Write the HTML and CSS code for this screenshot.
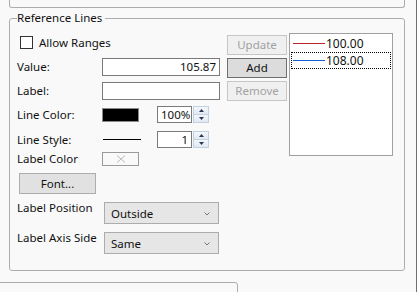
FILE: index.html
```
<!DOCTYPE html>
<html>
<head>
<meta charset="utf-8">
<link rel="stylesheet" href="styles.css">
</head>
<body>
<div class="screen">
  <div class="prev-box"></div>
  <fieldset class="group">
    <legend class="legend">Reference Lines</legend>
    <div class="group-body">
      <div class="form">
        <div class="row r-allow">
          <span class="checkbox"></span><span class="check-text">Allow Ranges</span>
        </div>
        <div class="row r-value">
          <span class="lbl">Value:</span>
          <div class="input num">105.87</div>
        </div>
        <div class="row r-label">
          <span class="lbl">Label:</span>
          <div class="input"></div>
        </div>
        <div class="row r-color">
          <span class="lbl">Line Color:</span>
          <span class="swatch black"></span>
          <div class="spin-field">
            <div class="spin-box">100%</div>
            <div class="spinner">
              <span class="spin-btn"><svg width="5" height="3" viewBox="0 0 5 3"><path d="M0 3L2.5 0L5 3Z" fill="#24385a"/></svg></span>
              <span class="spin-btn"><svg width="5" height="3" viewBox="0 0 5 3"><path d="M0 0L2.5 3L5 0Z" fill="#24385a"/></svg></span>
            </div>
          </div>
        </div>
        <div class="row r-style">
          <span class="lbl">Line Style:</span>
          <span class="line-sample"><span class="line-stroke"></span></span>
          <div class="spin-field">
            <div class="spin-box">1</div>
            <div class="spinner">
              <span class="spin-btn"><svg width="5" height="3" viewBox="0 0 5 3"><path d="M0 3L2.5 0L5 3Z" fill="#24385a"/></svg></span>
              <span class="spin-btn"><svg width="5" height="3" viewBox="0 0 5 3"><path d="M0 0L2.5 3L5 0Z" fill="#24385a"/></svg></span>
            </div>
          </div>
        </div>
        <div class="row r-lcolor">
          <span class="lbl">Label Color</span>
          <span class="swatch empty"><svg width="10" height="8" viewBox="0 0 10 8"><path d="M1 0.5L9 7.5M9 0.5L1 7.5" stroke="#b4b4b4" stroke-width="0.9" fill="none"/></svg></span>
        </div>
        <div class="row r-font">
          <span class="btn font-btn">Font...</span>
        </div>
        <div class="row r-pos">
          <span class="lbl lbl-top">Label Position</span>
          <div class="combo"><span>Outside</span><svg width="6" height="4" viewBox="0 0 6 4"><path d="M0.5 0.5L3 3L5.5 0.5" stroke="#6a6a6a" stroke-width="0.9" fill="none"/></svg></div>
        </div>
        <div class="row r-axis">
          <span class="lbl lbl-top">Label Axis Side</span>
          <div class="combo"><span>Same</span><svg width="6" height="4" viewBox="0 0 6 4"><path d="M0.5 0.5L3 3L5.5 0.5" stroke="#6a6a6a" stroke-width="0.9" fill="none"/></svg></div>
        </div>
      </div>
      <div class="buttons">
        <span class="btn disabled">Update</span>
        <span class="btn primary">Add</span>
        <span class="btn disabled">Remove</span>
      </div>
      <div class="listbox">
        <div class="item"><span class="item-line red"></span><span class="item-text">100.00</span></div>
        <div class="item focused"><span class="item-line blue"></span><span class="item-text">108.00</span></div>
      </div>
    </div>
  </fieldset>
  <div class="next-box"></div>
</div>
</body>
</html>
```
FILE: styles.css
```
html, body {
  margin: 0;
  padding: 0;
  background: #f9f9f9;
}
body {
  font-family: "Noto Sans", "Open Sans", sans-serif;
  font-size: 11.5px;
  color: #111;
  overflow: hidden;
}
.screen {
  width: 416px;
  height: 292px;
  border-right: 1px solid #707070;
  overflow: hidden;
  position: relative;
}
.prev-box {
  margin-left: 9px;
  width: 396px;
  height: 8px;
  box-sizing: border-box;
  border: 1px solid #adadad;
  border-top: none;
  border-radius: 0 0 3px 3px;
}
.group {
  margin: 2px 0 0 9px;
  width: 396px;
  height: 261px;
  box-sizing: border-box;
  border: 1px solid #adadad;
  border-radius: 3px;
  padding: 7px 10px 0 7px;
  min-width: 0;
}
.legend {
  padding: 0 3px 0 0;
  line-height: 16px;
  font-size: 11.5px;
}
.group-body {
  display: flex;
  align-items: flex-start;
}
.form {
  width: 203px;
  display: flex;
  flex-direction: column;
}
.row {
  display: flex;
  align-items: center;
}
.lbl {
  width: 85px;
  flex: none;
  line-height: 16px;
}
.lbl-top {
  align-self: flex-start;
  margin-top: -2px;
}
.r-allow { margin-top: 3px; height: 13px; }
.r-value { margin-top: 9px; height: 18px; }
.r-label { margin-top: 6px; height: 18px; }
.r-color { margin-top: 6px; height: 17px; }
.r-style { margin-top: 8px; height: 17px; }
.r-lcolor { margin-top: 4px; height: 14px; }
.r-font { margin-top: 7px; height: 21px; }
.r-pos { margin-top: 8px; height: 22px; }
.r-axis { margin-top: 8px; height: 22px; }

.checkbox {
  width: 13px;
  height: 13px;
  box-sizing: border-box;
  border: 1px solid #333;
  background: #fff;
  margin-left: 3px;
  flex: none;
}
.check-text {
  margin-left: 6px;
  line-height: 16px;
}
.input {
  width: 118px;
  height: 18px;
  box-sizing: border-box;
  border: 1px solid #7a7a7a;
  background: #fff;
  line-height: 16px;
  padding: 0 3px;
}
.num { text-align: right; }

.swatch {
  width: 37px;
  height: 14px;
  box-sizing: border-box;
  border: 1px solid #9a9a9a;
  flex: none;
  display: flex;
  align-items: center;
  justify-content: center;
}
.swatch.black { background: #000; border-color: #8a8a8a; }
.swatch.empty { background: #f9f9f9; height: 14px; }

.line-sample {
  width: 39px;
  flex: none;
  display: flex;
  align-items: center;
  margin-left: 1px;
}
.line-stroke {
  display: block;
  width: 38px;
  height: 1px;
  background: #000;
}
.r-style .spin-field { margin-left: 15px; }
.spin-field {
  display: flex;
  margin-left: 18px;
  height: 17px;
}
.spin-box {
  width: 35px;
  height: 17px;
  box-sizing: border-box;
  border: 1px solid #7a7a7a;
  background: #fff;
  text-align: right;
  line-height: 15px;
  padding: 0 3px;
}
.spinner {
  margin-left: 1px;
  width: 16px;
  display: flex;
  flex-direction: column;
}
.spin-btn {
  flex: 1;
  box-sizing: border-box;
  border: 1px solid #c3d0e0;
  background: linear-gradient(#f3f6fa, #e3e9f2);
  display: flex;
  align-items: center;
  justify-content: center;
}
.spin-btn + .spin-btn { border-top: none; }

.btn {
  display: flex;
  align-items: center;
  justify-content: center;
  box-sizing: border-box;
  height: 20px;
  border: 1px solid #adadad;
  background: #e1e1e1;
  line-height: 16px;
}
.font-btn {
  width: 77px;
  height: 21px;
  margin-left: 2px;
}
.buttons {
  margin-left: 7px;
  margin-top: 2px;
  width: 60px;
  display: flex;
  flex-direction: column;
  gap: 3px;
}
.btn.disabled {
  background: #f0f0f0;
  border-color: #c6c6c6;
  color: #a2a2a2;
}
.btn.primary {
  background: #dcdcdc;
  border-color: #6f6f6f;
}

.combo {
  margin-left: 2px;
  width: 115px;
  height: 22px;
  box-sizing: border-box;
  border: 1px solid #acacac;
  background: #e6e6e6;
  display: flex;
  align-items: center;
  justify-content: space-between;
  padding: 1px 8px 0 6px;
}

.listbox {
  margin-left: 2px;
  width: 104px;
  height: 123px;
  box-sizing: border-box;
  border: 1px solid #a0a0a0;
  background: #fff;
  padding: 1px 1px 0 1px;
}
.item {
  height: 17px;
  box-sizing: border-box;
  display: flex;
  align-items: center;
  padding-left: 1px;
  border: 1px solid transparent;
}
.item.focused {
  border: 1px dotted #000;
}
.item-line {
  width: 32px;
  height: 1px;
  flex: none;
}
.item-line.red { background: #b8252d; }
.item-line.blue { background: #1560d0; }
.item-text {
  margin-left: 1px;
  line-height: 15px;
  font-size: 12px;
}

.next-box {
  margin-top: 11px;
  margin-left: -5px;
  width: 243px;
  height: 20px;
  box-sizing: border-box;
  border: 1px solid #adadad;
  border-radius: 0 3px 0 0;
}
```
